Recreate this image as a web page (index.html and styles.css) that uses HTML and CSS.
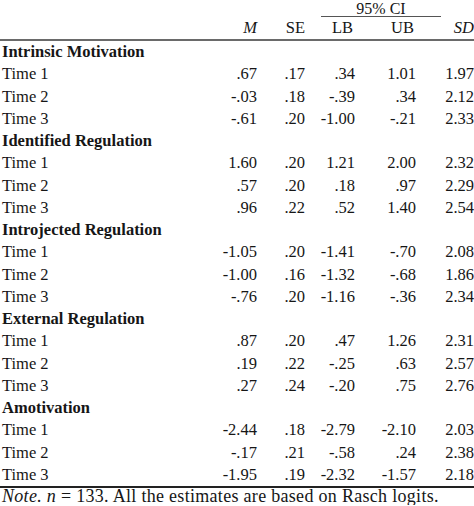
FILE: index.html
```html
<!DOCTYPE html>
<html>
<head>
<meta charset="utf-8">
<link rel="stylesheet" href="styles.css">
</head>
<body>
<div class="table">
  <div class="ci-row"><div class="ci">95% CI</div></div>
  <div class="row head">
    <span></span><span class="it">M</span><span>SE</span><span class="lb">LB</span><span class="ub">UB</span><span class="it">SD</span>
  </div>
  <div class="body">
    <div class="row group"><span>Intrinsic Motivation</span></div>
    <div class="row"><span>Time 1</span><span>.67</span><span>.17</span><span>.34</span><span>1.01</span><span>1.97</span></div>
    <div class="row"><span>Time 2</span><span>-.03</span><span>.18</span><span>-.39</span><span>.34</span><span>2.12</span></div>
    <div class="row"><span>Time 3</span><span>-.61</span><span>.20</span><span>-1.00</span><span>-.21</span><span>2.33</span></div>
    <div class="row group"><span>Identified Regulation</span></div>
    <div class="row"><span>Time 1</span><span>1.60</span><span>.20</span><span>1.21</span><span>2.00</span><span>2.32</span></div>
    <div class="row"><span>Time 2</span><span>.57</span><span>.20</span><span>.18</span><span>.97</span><span>2.29</span></div>
    <div class="row"><span>Time 3</span><span>.96</span><span>.22</span><span>.52</span><span>1.40</span><span>2.54</span></div>
    <div class="row group"><span>Introjected Regulation</span></div>
    <div class="row"><span>Time 1</span><span>-1.05</span><span>.20</span><span>-1.41</span><span>-.70</span><span>2.08</span></div>
    <div class="row"><span>Time 2</span><span>-1.00</span><span>.16</span><span>-1.32</span><span>-.68</span><span>1.86</span></div>
    <div class="row"><span>Time 3</span><span>-.76</span><span>.20</span><span>-1.16</span><span>-.36</span><span>2.34</span></div>
    <div class="row group"><span>External Regulation</span></div>
    <div class="row"><span>Time 1</span><span>.87</span><span>.20</span><span>.47</span><span>1.26</span><span>2.31</span></div>
    <div class="row"><span>Time 2</span><span>.19</span><span>.22</span><span>-.25</span><span>.63</span><span>2.57</span></div>
    <div class="row"><span>Time 3</span><span>.27</span><span>.24</span><span>-.20</span><span>.75</span><span>2.76</span></div>
    <div class="row group"><span>Amotivation</span></div>
    <div class="row"><span>Time 1</span><span>-2.44</span><span>.18</span><span>-2.79</span><span>-2.10</span><span>2.03</span></div>
    <div class="row"><span>Time 2</span><span>-.17</span><span>.21</span><span>-.58</span><span>.24</span><span>2.38</span></div>
    <div class="row"><span>Time 3</span><span>-1.95</span><span>.19</span><span>-2.32</span><span>-1.57</span><span>2.18</span></div>
  </div>
  <div class="note"><i>Note.</i> <i>n</i> = 133. All the estimates are based on Rasch logits.</div>
</div>
</body>
</html>
```
FILE: styles.css
```css
html, body {
  margin: 0;
  padding: 0;
  background: #ffffff;
}
body {
  font-family: "Liberation Serif", "Times New Roman", serif;
  font-size: 16.5px;
  color: #161616;
  overflow: hidden;
}
.table {
  width: 474px;
}
.ci-row {
  height: 17px;
  padding-left: 321px;
}
.ci {
  width: 120px;
  text-align: center;
  line-height: 15px;
  padding-top: 1px;
  font-size: 16px;
  border-bottom: 1.5px solid #555;
}
.row {
  display: grid;
  grid-template-columns: 205px 50px 48px 50px 61px 58px;
  line-height: 22.25px;
  padding-left: 2px;
}
.row span {
  text-align: right;
  white-space: nowrap;
}
.row span:first-child {
  text-align: left;
}
.head {
  line-height: 22px;
  border-bottom: 2px solid #6a6a6a;
}
.head .lb,
.head .ub {
  padding-right: 2px;
}
.it {
  font-style: italic;
}
.body {
  border-bottom: 2px solid #222;
}
.group span {
  font-weight: bold;
  grid-column: 1 / -1;
}
.note {
  padding-left: 2px;
  font-size: 18px;
  letter-spacing: 0.3px;
  line-height: 17px;
  white-space: nowrap;
}
```
